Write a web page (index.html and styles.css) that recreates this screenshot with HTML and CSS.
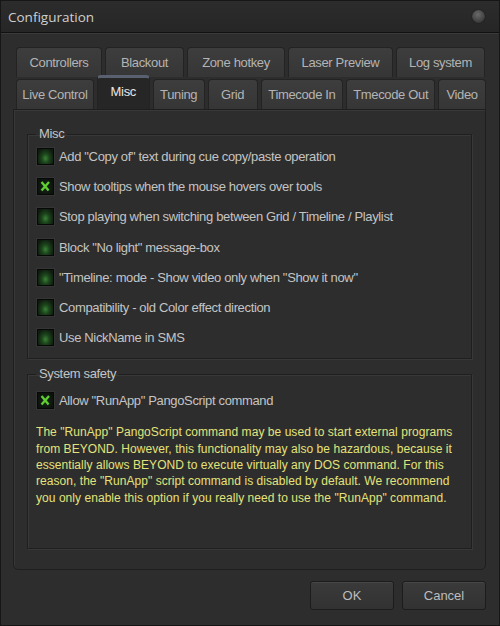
FILE: index.html
```html
<!DOCTYPE html>
<html lang="en">
<head>
    <meta charset="UTF-8">
    <title>Configuration</title>
    <link rel="stylesheet" href="styles.css">
</head>
<body>
    <div class="window">
        <header class="titlebar">
            <span class="title">Configuration</span>
            <span class="close-dot"></span>
        </header>

        <div class="content">
            <div class="tabs">
                <div class="tab-row row-back">
                    <div class="tab">Controllers</div>
                    <div class="tab">Blackout</div>
                    <div class="tab">Zone hotkey</div>
                    <div class="tab">Laser Preview</div>
                    <div class="tab">Log system</div>
                </div>
                <div class="tab-row row-front">
                    <div class="tab">Live Control</div>
                    <div class="tab active">Misc</div>
                    <div class="tab">Tuning</div>
                    <div class="tab">Grid</div>
                    <div class="tab">Timecode In</div>
                    <div class="tab">Tmecode Out</div>
                    <div class="tab">Video</div>
                </div>
            </div>

            <section class="panel">
                <fieldset class="group group-misc">
                    <legend>Misc</legend>
                    <div class="option"><span class="check"></span>Add "Copy of" text during cue copy/paste operation</div>
                    <div class="option"><span class="check on"><svg viewBox="0 0 17 17"><path d="M4 3.5l8 9.5M12.5 3.5l-8.5 9.5"/></svg></span>Show tooltips when the mouse hovers over tools</div>
                    <div class="option"><span class="check"></span>Stop playing when switching between Grid / Timeline / Playlist</div>
                    <div class="option"><span class="check"></span>Block "No light" message-box</div>
                    <div class="option"><span class="check"></span>"Timeline: mode - Show video only when "Show it now"</div>
                    <div class="option"><span class="check"></span>Compatibility - old Color effect direction</div>
                    <div class="option"><span class="check"></span>Use NickName in SMS</div>
                </fieldset>

                <fieldset class="group group-safety">
                    <legend>System safety</legend>
                    <div class="option"><span class="check on"><svg viewBox="0 0 17 17"><path d="M4 3.5l8 9.5M12.5 3.5l-8.5 9.5"/></svg></span>Allow "RunApp" PangoScript command</div>
                    <p class="warning">The "RunApp" PangoScript command may be used to start external programs<br>
                    from BEYOND. However, this functionality may also be hazardous, because it<br>
                    essentially allows BEYOND to execute virtually any DOS command. For this<br>
                    reason, the "RunApp" script command is disabled by default. We recommend<br>
                    you only enable this option if you really need to use the "RunApp" command.</p>
                </fieldset>
            </section>

            <div class="buttons">
                <button class="btn">OK</button>
                <button class="btn">Cancel</button>
            </div>
        </div>
    </div>
</body>
</html>
```

FILE: styles.css
```css
body {
    margin: 0;
    background-color: #1a1a1a;
    font-family: "Liberation Sans", Arial, sans-serif;
    font-size: 13px;
    letter-spacing: -0.35px;
    color: #c4c4c4;
}
.window {
    width: 500px;
    height: 626px;
    box-sizing: border-box;
    border: 1px solid #161616;
    background-color: #2d2d2d;
    display: flex;
    flex-direction: column;
}
.titlebar {
    height: 31px;
    display: flex;
    align-items: center;
    justify-content: space-between;
    padding: 0 14px 0 7px;
    background: linear-gradient(#2c2c2c, #262626);
    border-bottom: 1px solid #111;
    box-shadow: 0 1px 0 #3a3a3a;
}
.title {
    font-family: "Open Sans", "Liberation Sans", sans-serif;
    font-size: 13.5px;
    letter-spacing: 0;
    color: #cfcfcf;
}
.close-dot {
    width: 13px;
    height: 13px;
    border-radius: 50%;
    background: radial-gradient(circle at 45% 35%, #6a6a6a, #3c3c3c 70%);
    box-shadow: 0 0 1px #000;
}
.content {
    padding: 14px 13px 0 12px;
}
.tabs {
    display: flex;
    flex-direction: column;
    gap: 2px;
    padding-left: 3px;
}
.tab-row {
    display: flex;
    gap: 3px;
    height: 30px;
}
.tab {
    box-sizing: border-box;
    height: 30px;
    display: flex;
    align-items: center;
    justify-content: center;
    background: linear-gradient(#3d3d3d, #363636);
    border: 1px solid #232323;
    border-bottom: none;
    border-radius: 4px 4px 0 0;
    color: #b4b4b4;
    white-space: nowrap;
}
.row-back .tab:nth-child(1) { width: 86px; }
.row-back .tab:nth-child(2) { width: 79px; }
.row-back .tab:nth-child(3) { width: 98px; }
.row-back .tab:nth-child(4) { width: 105px; }
.row-back .tab:nth-child(5) { width: 89px; }
.row-front .tab:nth-child(1) { width: 78px; }
.row-front .tab:nth-child(2) { width: 53px; }
.row-front .tab:nth-child(3) { width: 52px; }
.row-front .tab:nth-child(4) { width: 50px; }
.row-front .tab:nth-child(5) { width: 83px; }
.row-front .tab:nth-child(6) { width: 89px; }
.row-front .tab:nth-child(7) { width: 48px; }
.tab.active {
    height: 34px;
    margin-top: -4px;
    padding-bottom: 5px;
    background: #262626;
    border-top: 3px solid #596070;
    color: #e6e6e6;
    position: relative;
    z-index: 1;
}
.panel {
    box-sizing: border-box;
    height: 461px;
    display: flex;
    flex-direction: column;
    border: 1px solid #1e1e1e;
    border-radius: 0 0 5px 5px;
    box-shadow: inset 1px 1px 0 #383838;
    background-color: #2d2d2d;
    padding: 17px 13px 20px 13px;
}
.group {
    margin: 0;
    padding: 0 8px 5px 8px;
    border: 1px solid #1f1f1f;
    box-shadow: inset 1px 1px 0 #383838, 1px 1px 0 #383838;
}
.group legend {
    padding: 0 3px;
    line-height: 14px;
    color: #c4c4c4;
}
.group-safety {
    margin-top: 8px;
    flex: 1;
    padding-top: 4px;
}
.option {
    display: flex;
    align-items: center;
    gap: 5px;
    height: 30.3px;
    padding-left: 1px;
    white-space: nowrap;
}
.check {
    box-sizing: border-box;
    width: 17px;
    height: 17px;
    flex: none;
    border: 1px solid #080808;
    box-shadow: 0 0 0 1px #353535;
    background: radial-gradient(ellipse at 50% 62%, #3a8036 0, #1c451c 35%, #0e1a0e 80%);
}
.check.on {
    background: radial-gradient(ellipse at 50% 55%, #18261a 0, #0b110b 80%);
}
.check svg {
    display: block;
    width: 15px;
    height: 15px;
}
.check path {
    stroke: #5fcf30;
    stroke-width: 2.6;
    fill: none;
}
.warning {
    margin: 9px 0 0 0;
    font-size: 12px;
    letter-spacing: 0.05px;
    line-height: 16.3px;
    white-space: nowrap;
    color: #e3e37a;
}
.buttons {
    display: flex;
    justify-content: flex-end;
    gap: 8px;
    margin-top: 11px;
}
.btn {
    width: 84px;
    height: 29px;
    font-family: "Liberation Sans", Arial, sans-serif;
    font-size: 13px;
    color: #bdbdbd;
    background: linear-gradient(#3a3a3a, #323232);
    border: 1px solid #1c1c1c;
    border-radius: 3px;
    box-shadow: inset 0 1px 0 #474747;
}
```
